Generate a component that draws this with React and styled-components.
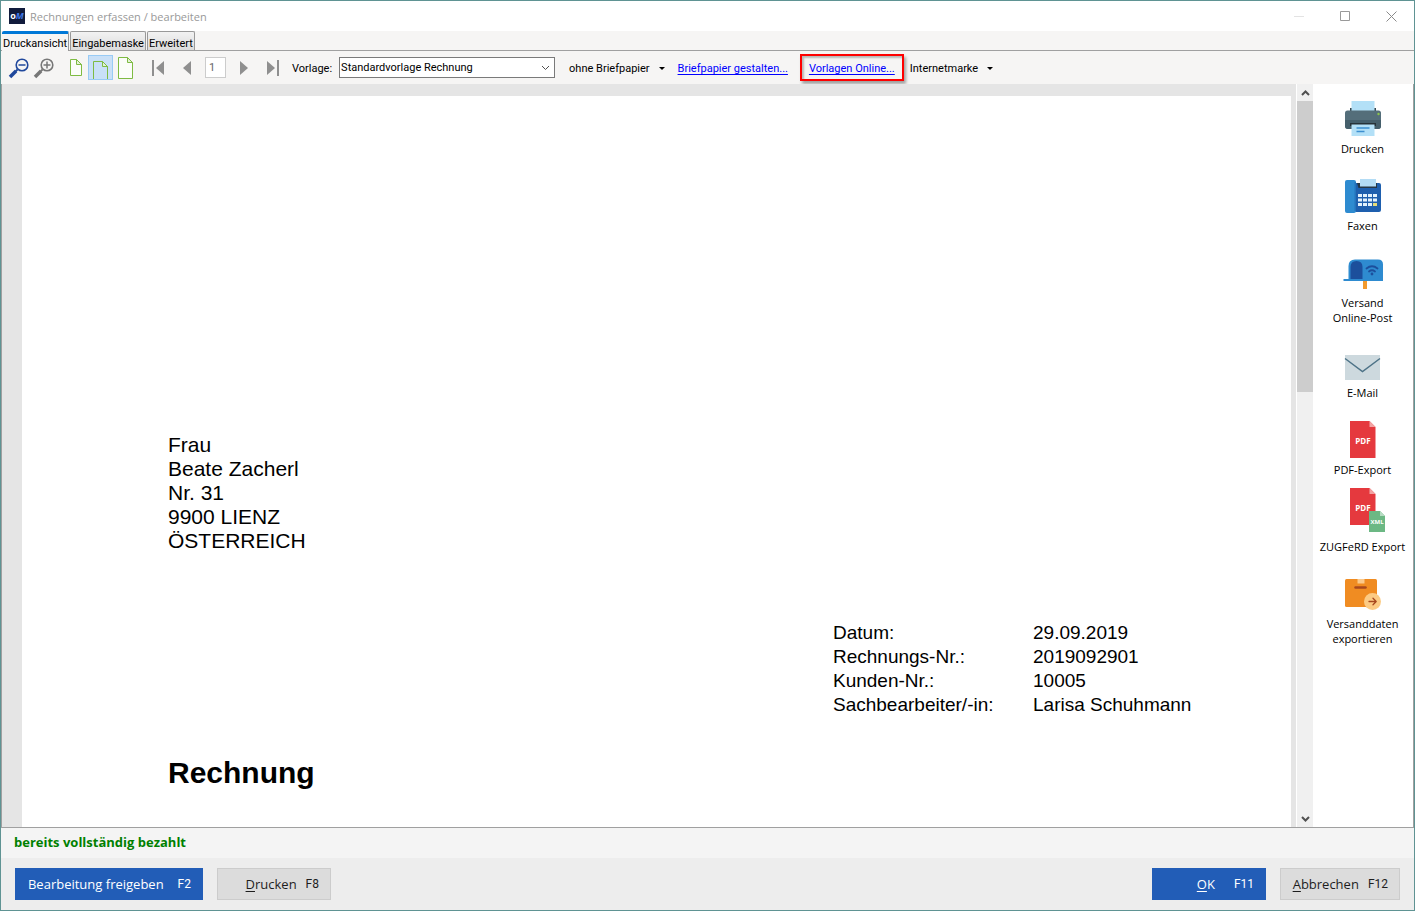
import React from 'react';
import styled, { createGlobalStyle, css, ThemeProvider } from 'styled-components';

const theme = {
  colors: {
    frame: '#5f9393',
    line: '#a0a0a0',
    toolbar: '#f6f5f4',
    desk: '#e5e5e5',
    status: '#f4f4f4',
    footer: '#ededed',
    primary: '#225db7',
    tabActive: '#0078d7',
    link: '#0000ff',
    paid: '#008000',
    mark: '#ff0000',
    nav: '#8f8f8f',
    page: '#7ebb42',
  },
  fonts: {
    ui: '"Open Sans", "Noto Sans", sans-serif',
    toolbar: 'Roboto, "Liberation Sans", sans-serif',
    paper: '"Liberation Sans", Arial, sans-serif',
  },
};

const tabs = ['Druckansicht', 'Eingabemaske', 'Erweitert'];

const address = ['Frau', 'Beate Zacherl', 'Nr. 31', '9900 LIENZ', 'ÖSTERREICH'];

const details = [
  ['Datum:', '29.09.2019'],
  ['Rechnungs-Nr.:', '2019092901'],
  ['Kunden-Nr.:', '10005'],
  ['Sachbearbeiter/-in:', 'Larisa Schuhmann'],
];

const PrinterIcon = () => (
  <svg width="48" height="48" viewBox="0 0 48 48" aria-hidden="true">
    <path fill="#37474f" d="M11 15h26v8H11z" />
    <path fill="#b3e0f7" d="M12.500 8h23v10h-23z" />
    <path fill="#546e7a" d="M6 20q0-2.500 2.500-2.500h31q2.500 0 2.500 2.500v13q0 3-3 3H9q-3 0-3-3z" />
    <path fill="#455f6b" d="M6 27h36v6q0 3-3 3H9q-3 0-3-3z" />
    <path fill="#263238" d="M11 30h26v3H11z" />
    <circle cx="39.500" cy="21" r="1.200" fill="#8bc34a" />
    <path fill="#b3e0f7" d="M12.500 31.500h23V43h-23z" />
    <path stroke="#3d8fd0" strokeWidth="1.500" d="M17.500 35h13M17.500 38.500h8" />
  </svg>
);

const FaxIcon = () => (
  <svg width="48" height="48" viewBox="0 0 48 48" aria-hidden="true">
    <rect x="14" y="13" width="28" height="29" rx="2" fill="#1e5fae" />
    <path fill="#263746" d="M18 13h20v5H19.500z" />
    <path fill="#b3dcf5" d="M21 9h16v7.500H21z" />
    <rect x="6" y="10" width="11" height="33" rx="2" fill="#2e8bd0" />
    <path fill="#2375bd" d="M15.500 12h1.500v29h-1.500z" />
    {[24, 28.5, 33].map((y) =>
      [19, 24, 29, 34].map((x) => (
        <rect
          key={`${x}-${y}`}
          x={x}
          y={y}
          width="4"
          height="3"
          fill={x === 34 && y === 33 ? '#e6dc7a' : '#e3f2fd'}
        />
      )),
    )}
  </svg>
);

const MailboxIcon = () => (
  <svg width="48" height="48" viewBox="0 0 48 48" aria-hidden="true">
    <path fill="#f29a2e" d="M24 33h4v9h-4z" />
    <path fill="#2e8bd0" d="M16 12.500h23q5 0 5 5V34H9.500V19q0-6.500 6.500-6.500z" />
    <path fill="#1c4f9c" d="M11.500 32V20q0-6 6-6t6 6v12z" />
    <path fill="#2e8bd0" d="M4.500 32H44v2H4.500z" />
    <g fill="none" stroke="#1c4f9c" strokeWidth="1.800" strokeLinecap="round">
      <path d="M27.500 21.500q5.500-4.500 11 0" />
      <path d="M30 24.500q3-2.500 6 0" />
    </g>
    <circle cx="33" cy="27" r="1.400" fill="#1c4f9c" />
  </svg>
);

const MailIcon = () => (
  <svg width="48" height="48" viewBox="0 0 48 48" aria-hidden="true">
    <path fill="#cdd9de" d="M6 18h35v25H6z" />
    <path fill="none" stroke="#4d7387" strokeWidth="1.500" d="M6 21.500l17.500 13 17.500-13" />
  </svg>
);

const PdfIcon = () => (
  <svg width="48" height="48" viewBox="0 0 48 48" aria-hidden="true">
    <path fill="#e5393e" d="M11 7h19.500l6 6v31H11z" />
    <path fill="#f3a3a3" d="M30.500 7l6 6h-6z" />
    <SvgText x="24" y="30" $size={8}>
      PDF
    </SvgText>
  </svg>
);

const XmlIcon = () => (
  <svg width="48" height="48" viewBox="0 0 48 48" aria-hidden="true">
    <path fill="#e5393e" d="M11-3h19.500l6 6v31H11z" />
    <path fill="#f3a3a3" d="M30.500-3l6 6h-6z" />
    <SvgText x="24" y="20" $size={8}>
      PDF
    </SvgText>
    <path fill="#6cb884" d="M30 20h11l5 5v16H30z" />
    <path fill="#b5dcc2" d="M41 20l5 5h-5z" />
    <SvgText x="38" y="33" $size={6}>
      XML
    </SvgText>
  </svg>
);

const ParcelIcon = () => (
  <svg width="48" height="48" viewBox="0 0 48 48" aria-hidden="true">
    <rect x="6" y="11" width="32" height="28" rx="1.500" fill="#f08c22" />
    <path fill="#fbc98b" d="M18.500 11h7v4.500h-7z" />
    <path stroke="#a8481e" strokeWidth="2.500" strokeLinecap="round" d="M16.500 19.500h10" />
    <circle cx="33.500" cy="33.500" r="8.500" fill="#fccb84" />
    <path
      fill="none"
      stroke="#a8481e"
      strokeWidth="1.300"
      strokeLinecap="round"
      strokeLinejoin="round"
      d="M30 33.500h7M34 30.300l3.200 3.200-3.200 3.200"
    />
  </svg>
);

const actions = [
  { icon: PrinterIcon, lines: ['Drucken'] },
  { icon: FaxIcon, lines: ['Faxen'] },
  { icon: MailboxIcon, lines: ['Versand', 'Online-Post'] },
  { icon: MailIcon, lines: ['E-Mail'] },
  { icon: PdfIcon, lines: ['PDF-Export'] },
  { icon: XmlIcon, lines: ['ZUGFeRD Export'] },
  { icon: ParcelIcon, lines: ['Versanddaten', 'exportieren'] },
];

const ZoomIcon = ({ color, plus }) => (
  <svg width="22" height="22" viewBox="0 0 22 22" fill="none" stroke={color} aria-hidden="true">
    <circle cx="14" cy="8" r="5.800" strokeWidth="1.600" />
    <path strokeWidth="1.500" d={plus ? 'M10.500 8h7M14 4.500v7' : 'M10.500 8h7'} />
    <path strokeWidth="1.800" d="M9.500 12.500L7 15" />
    <path strokeWidth="3.500" d="M8 14l-6 6" />
  </svg>
);

const PageIcon = ({ width, height, open }) => (
  <svg
    width={width}
    height={height}
    viewBox={`0 0 ${width} ${height}`}
    fill="none"
    stroke={theme.colors.page}
    aria-hidden="true"
  >
    <path
      fill={open ? 'none' : '#fbfdf9'}
      d={
        open
          ? `M.5 ${height}V.5H${width - 5.5}l5 5V${height}`
          : `M.5.5H${width - 5.5}l5 5V${height - 0.5}H.5z`
      }
    />
    <path fill="#e4f2d6" d={`M${width - 5.5}.5v5h5z`} />
  </svg>
);

const NavIcon = ({ back, bar }) => (
  <svg width="14" height="16" viewBox="0 0 14 16" fill={theme.colors.nav} aria-hidden="true">
    <path d={back ? 'M12 1v14L4 8z' : 'M2 1v14l8-7z'} />
    {bar && <path d={back ? 'M0 0h2v16H0z' : 'M12 0h2v16h-2z'} />}
  </svg>
);

const Chevron = ({ up, size = 9, weight = 2 }) => (
  <svg
    width={size}
    height="6"
    viewBox="0 0 9 6"
    fill="none"
    stroke="#505050"
    strokeWidth={weight}
    aria-hidden="true"
  >
    <path d={up ? 'M1 5l3.500-3.500L8 5' : 'M1 1l3.500 3.500L8 1'} />
  </svg>
);

const App = () => {
  return (
    <ThemeProvider theme={theme}>
      <GlobalStyle />
      <Window>
        <TitleBar>
          <Logo aria-hidden="true">
            <b>o</b>
            <i>M</i>
          </Logo>
          <Title>Rechnungen erfassen / bearbeiten</Title>
          <WindowButtons>
            <WindowButton aria-label="Minimieren">
              <svg width="11" height="11" stroke="#e3e3e3">
                <path d="M0 5.500h10" />
              </svg>
            </WindowButton>
            <WindowButton aria-label="Maximieren">
              <svg width="11" height="11" fill="none" stroke="#999">
                <path d="M.5.500h9v9h-9z" />
              </svg>
            </WindowButton>
            <WindowButton aria-label="Schließen">
              <svg width="11" height="11" fill="none" stroke="#8a8a8a">
                <path d="M.5.500l10 10M10.500.500l-10 10" />
              </svg>
            </WindowButton>
          </WindowButtons>
        </TitleBar>

        <TabList role="tablist">
          {tabs.map((tab, i) => (
            <Tab key={tab} role="tab" aria-selected={i === 0} $active={i === 0}>
              {tab}
            </Tab>
          ))}
        </TabList>

        <Toolbar>
          <ToolGroup>
            <ToolButton aria-label="Verkleinern">
              <ZoomIcon color="#20489c" />
            </ToolButton>
            <ToolButton aria-label="Vergrößern">
              <ZoomIcon color="#777" plus />
            </ToolButton>
          </ToolGroup>
          <ToolGroup>
            <ToolButton aria-label="Ganze Seite">
              <PageIcon width={12} height={17} />
            </ToolButton>
            <ToolButton aria-label="Seitenbreite" $active>
              <PageIcon width={15} height={18} open />
            </ToolButton>
            <ToolButton aria-label="Originalgröße">
              <PageIcon width={15} height={22} />
            </ToolButton>
          </ToolGroup>
          <ToolGroup>
            <NavButton aria-label="Erste Seite">
              <NavIcon back bar />
            </NavButton>
            <NavButton aria-label="Vorherige Seite">
              <NavIcon back />
            </NavButton>
            <PageInput aria-label="Seite" defaultValue="1" />
            <NavButton aria-label="Nächste Seite">
              <NavIcon />
            </NavButton>
            <NavButton aria-label="Letzte Seite">
              <NavIcon bar />
            </NavButton>
          </ToolGroup>
          <TemplateField>
            <TemplateLabel htmlFor="template">Vorlage:</TemplateLabel>
            <SelectBox>
              <TemplateSelect id="template">
                <option>Standardvorlage Rechnung</option>
              </TemplateSelect>
              <Chevron size={11} weight={1} />
            </SelectBox>
          </TemplateField>
          <ToolLinks>
            <MenuButton>
              ohne Briefpapier
              <Caret />
            </MenuButton>
            <ToolLink href="#briefpapier">Briefpapier gestalten...</ToolLink>
            <Highlight>
              <ToolLink href="#vorlagen">Vorlagen Online...</ToolLink>
            </Highlight>
            <MenuButton>
              Internetmarke
              <Caret />
            </MenuButton>
          </ToolLinks>
        </Toolbar>

        <Content>
          <Desk>
            <Paper>
              <Address>
                {address.map((line) => (
                  <div key={line}>{line}</div>
                ))}
              </Address>
              <Details>
                {details.map(([label, value]) => (
                  <React.Fragment key={label}>
                    <dt>{label}</dt>
                    <dd>{value}</dd>
                  </React.Fragment>
                ))}
              </Details>
              <Heading>Rechnung</Heading>
            </Paper>
          </Desk>
          <ScrollBar>
            <ScrollButton aria-label="Nach oben">
              <Chevron up />
            </ScrollButton>
            <ScrollTrack>
              <ScrollThumb />
            </ScrollTrack>
            <ScrollButton aria-label="Nach unten">
              <Chevron />
            </ScrollButton>
          </ScrollBar>
          <SidePanel>
            {actions.map(({ icon: Icon, lines }) => (
              <Action key={lines[0]}>
                <Icon />
                {lines.map((line) => (
                  <span key={line}>{line}</span>
                ))}
              </Action>
            ))}
          </SidePanel>
        </Content>

        <StatusBar>bereits vollständig bezahlt</StatusBar>

        <Footer>
          <FooterButton $primary $width={188}>
            Bearbeitung freigeben
            <Key $gap={14}>F2</Key>
          </FooterButton>
          <FooterButton $width={114}>
            <span>
              <u>D</u>rucken
            </span>
            <Key>F8</Key>
          </FooterButton>
          <Spacer />
          <FooterButton $primary $width={114}>
            <span>
              <u>O</u>K
            </span>
            <Key $gap={19}>F11</Key>
          </FooterButton>
          <FooterButton $width={120}>
            <span>
              <u>A</u>bbrechen
            </span>
            <Key>F12</Key>
          </FooterButton>
        </Footer>
      </Window>
    </ThemeProvider>
  );
};

const GlobalStyle = createGlobalStyle`
  * {
    box-sizing: border-box;
  }

  body {
    margin: 0;
  }

  button {
    padding: 0;
    border: none;
    background: none;
    font: inherit;
    color: inherit;
  }
`;

const Window = styled.div`
  display: flex;
  flex-direction: column;
  height: 100vh;
  border: 1px solid ${({ theme }) => theme.colors.frame};
  background-color: white;
  font-family: ${({ theme }) => theme.fonts.ui};
  color: black;
`;

const TitleBar = styled.header`
  display: flex;
  align-items: center;
  flex: none;
  height: 30px;
  padding-left: 8px;
`;

const Logo = styled.div`
  display: flex;
  align-items: center;
  justify-content: center;
  width: 16px;
  height: 16px;
  background-color: #111b3c;
  font-size: 9px;
  line-height: 16px;
  color: white;

  > i {
    font-weight: 700;
    color: #4079e8;
  }
`;

const Title = styled.div`
  flex: 1;
  padding-left: 5px;
  font-size: 11px;
  line-height: 15px;
  color: #999;
`;

const WindowButtons = styled.div`
  display: flex;
`;

const WindowButton = styled.button`
  display: flex;
  align-items: center;
  justify-content: center;
  width: 46px;
  height: 29px;
`;

const TabList = styled.div`
  display: flex;
  align-items: flex-end;
  column-gap: 1px;
  flex: none;
  height: 20px;
  padding-left: 1px;
  border-bottom: 1px solid ${({ theme }) => theme.colors.line};
  background-color: ${({ theme }) => theme.colors.toolbar};
  font-family: ${({ theme }) => theme.fonts.toolbar};
  font-size: 11px;
`;

const Tab = styled.button`
  height: 19px;
  padding: 4px 1px 0;
  border: 1px solid #999;
  border-bottom: none;
  border-radius: 2px 2px 0 0;
  background: linear-gradient(#f2f2f2, #dcdcdc);
  white-space: nowrap;

  ${({ $active, theme }) =>
    $active &&
    css`
      height: 20px;
      margin-bottom: -1px;
      padding-top: 2px;
      border-top: 3px solid ${theme.colors.tabActive};
      border-left: none;
      background: ${theme.colors.toolbar};
    `}
`;

const Toolbar = styled.div`
  display: flex;
  align-items: center;
  flex: none;
  height: 33px;
  padding-left: 5px;
  background-color: ${({ theme }) => theme.colors.toolbar};
  font-family: ${({ theme }) => theme.fonts.toolbar};
  font-size: 11px;
  white-space: nowrap;
`;

const ToolGroup = styled.div`
  display: flex;
  align-items: center;
  margin-right: 7px;
`;

const ToolButton = styled.button`
  display: flex;
  align-items: center;
  justify-content: center;
  width: 25px;
  height: 25px;

  ${({ $active }) =>
    $active &&
    css`
      align-items: flex-end;
      border: 1px solid #99cbf5;
      background-color: #c9e0f7;
    `}
`;

const NavButton = styled.button`
  display: flex;
  align-items: center;
  justify-content: center;
  width: 27px;
  height: 25px;
`;

const PageInput = styled.input`
  width: 21px;
  height: 21px;
  margin: 0 5px 0 6px;
  padding: 0 3px;
  border: 1px solid #ccc;
  background-color: white;
  font: inherit;
  color: #666;
`;

const TemplateField = styled.div`
  display: flex;
  align-items: center;
  column-gap: 7px;
`;

const TemplateLabel = styled.label`
  padding-top: 2px;
`;

const SelectBox = styled.div`
  position: relative;

  > svg {
    position: absolute;
    top: 8px;
    right: 4px;
    pointer-events: none;
  }
`;

const TemplateSelect = styled.select`
  display: block;
  width: 216px;
  height: 21px;
  padding: 0 1px;
  border: 1px solid #7a7a7a;
  border-radius: 0;
  appearance: none;
  background-color: white;
  font: inherit;
  color: black;
`;

const ToolLinks = styled.div`
  display: flex;
  align-items: center;
  padding-left: 14px;
`;

const MenuButton = styled.button`
  display: flex;
  align-items: center;
  column-gap: 9px;
  padding-top: 2px;
`;

const Caret = styled.span`
  border: 3px solid transparent;
  border-top-color: black;
  border-bottom: none;
`;

const ToolLink = styled.a`
  margin-left: 13px;
  padding-top: 2px;
  color: ${({ theme }) => theme.colors.link};
  text-underline-offset: 2px;
`;

const Highlight = styled.div`
  display: flex;
  align-items: center;
  height: 27px;
  margin: 0 6px 0 12px;
  padding: 0 7px;
  border: 2px solid ${({ theme }) => theme.colors.mark};
  box-shadow: 2px 3px 3px rgba(0, 0, 0, 0.35), inset 2px 2px 2px rgba(0, 0, 0, 0.25);

  > ${ToolLink} {
    margin-left: 0;
  }
`;

const Content = styled.main`
  display: flex;
  flex: 1;
  min-height: 0;
  border-right: 1px solid ${({ theme }) => theme.colors.line};
  border-bottom: 1px solid ${({ theme }) => theme.colors.line};
  border-left: 1px solid ${({ theme }) => theme.colors.line};
`;

const Desk = styled.div`
  flex: 1;
  min-width: 0;
  overflow: hidden;
  padding: 12px 5px 0 20px;
  background-color: ${({ theme }) => theme.colors.desk};
`;

const Paper = styled.article`
  min-height: 100%;
  padding: 337px 0 0 146px;
  background-color: white;
  font-family: ${({ theme }) => theme.fonts.paper};
`;

const Address = styled.address`
  font-size: 21px;
  font-style: normal;
  line-height: 24px;
`;

const Details = styled.dl`
  display: grid;
  grid-template-columns: 200px auto;
  margin: 68px 0 0 665px;
  font-size: 19px;
  line-height: 24px;

  > dd {
    margin: 0;
  }
`;

const Heading = styled.h1`
  margin: 38px 0 0;
  font-size: 30px;
  line-height: 36px;
`;

const ScrollBar = styled.div`
  display: flex;
  flex-direction: column;
  width: 17px;
  border-left: 1px solid white;
  background-color: #f0f0f0;
`;

const ScrollButton = styled.button`
  display: flex;
  align-items: center;
  justify-content: center;
  height: 17px;
`;

const ScrollTrack = styled.div`
  flex: 1;
`;

const ScrollThumb = styled.div`
  height: 41%;
  background-color: #cdcdcd;
`;

const SidePanel = styled.aside`
  width: 100px;
  padding: 9px 1px 0 0;
  font-size: 11px;
  font-weight: 500;
  line-height: 15px;
`;

const Action = styled.button`
  display: flex;
  flex-direction: column;
  align-items: center;
  width: 100%;
  min-height: 77px;
  padding-bottom: 12px;
  white-space: nowrap;

  > svg {
    flex: none;
    overflow: visible;
  }
`;

const SvgText = styled.text`
  font-family: ${({ theme }) => theme.fonts.ui};
  font-size: ${({ $size }) => $size}px;
  font-weight: 700;
  text-anchor: middle;
  fill: white;
`;

const StatusBar = styled.div`
  flex: none;
  height: 30px;
  padding-left: 13px;
  background-color: ${({ theme }) => theme.colors.status};
  font-size: 13px;
  font-weight: 700;
  line-height: 28px;
  color: ${({ theme }) => theme.colors.paid};
`;

const Footer = styled.footer`
  display: flex;
  align-items: center;
  column-gap: 14px;
  flex: none;
  height: 52px;
  padding: 0 14px;
  background-color: ${({ theme }) => theme.colors.footer};
`;

const FooterButton = styled.button`
  display: flex;
  align-items: center;
  justify-content: flex-end;
  min-width: ${({ $width }) => $width}px;
  height: 32px;
  padding: 0 11px;
  border: 1px solid ${({ $primary, theme }) => ($primary ? theme.colors.primary : '#ccc')};
  background-color: ${({ $primary, theme }) => ($primary ? theme.colors.primary : '#dcdcdc')};
  font-size: 13px;
  font-weight: 500;
  color: ${({ $primary }) => ($primary ? 'white' : '#1e1e1e')};
  white-space: nowrap;

  u {
    text-underline-offset: 2px;
  }
`;

const Key = styled.span`
  margin-left: ${({ $gap = 9 }) => $gap}px;
  font-family: ${({ theme }) => theme.fonts.toolbar};
  font-size: 12px;
  font-weight: 400;
`;

const Spacer = styled.div`
  flex: 1;
`;

export default App;
